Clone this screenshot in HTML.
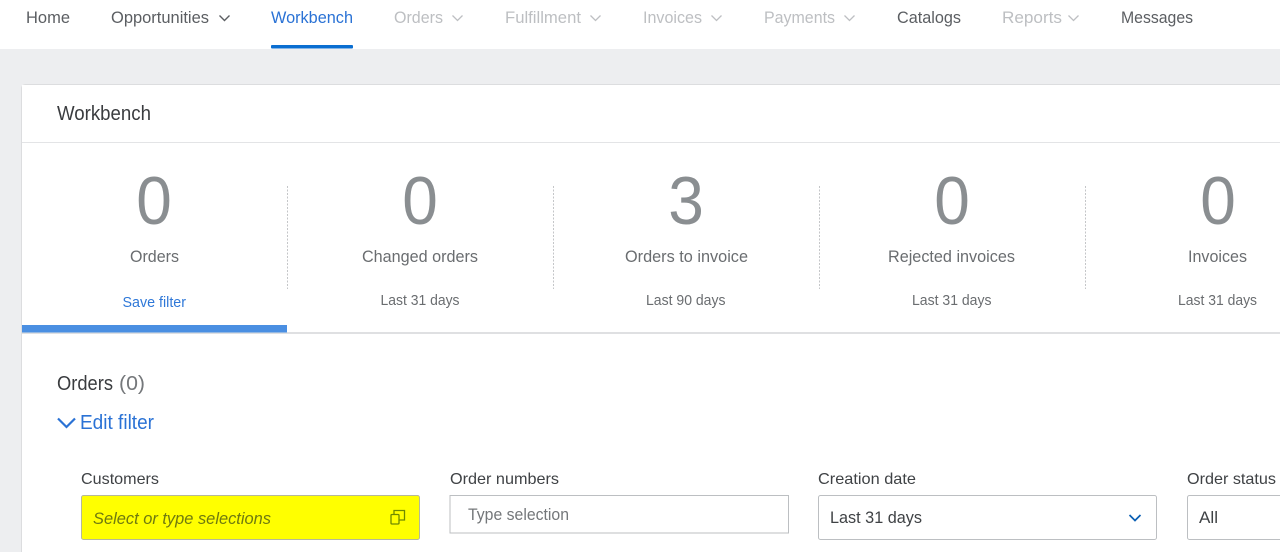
<!DOCTYPE html>
<html lang="en"><head><meta charset="utf-8"><title>Workbench</title>
<style>
html,body{margin:0;padding:0;width:1280px;height:552px;overflow:hidden;background:#fff}
svg{display:block}
text{font-family:"Liberation Sans",sans-serif}
.nav{font-size:16.500px;fill:#5b5e62}
.dis{font-size:16.500px;fill:#bdbfc2}
.lab{font-size:17px;fill:#6a6d70}
.sub{font-size:15px;fill:#6a6d70}
.num{font-size:68px;fill:#8a8e91}
.fl{font-size:16px;fill:#3f4245}
</style></head><body>
<svg width="1280" height="552" viewBox="0 0 1280 552" xmlns="http://www.w3.org/2000/svg">
<rect width="1280" height="552" fill="#edeef0"/>
<rect width="1280" height="49" fill="#fff"/>
<text class="nav" x="26" y="23" textLength="44" lengthAdjust="spacingAndGlyphs">Home</text>
<text class="nav" x="111" y="23" textLength="98" lengthAdjust="spacingAndGlyphs">Opportunities</text>
<path d="M219.500 15.500l5 5 5-5" fill="none" stroke="#5b5e62" stroke-width="1.400"/>
<text class="nav" x="271" y="23" textLength="82" lengthAdjust="spacingAndGlyphs" style="fill:#2a72d5">Workbench</text>
<rect x="271" y="45" width="82" height="3.500" rx="1" fill="#0a6ed1"/>
<text class="dis" x="394" y="23" textLength="49" lengthAdjust="spacingAndGlyphs">Orders</text>
<path d="M452.500 15.500l5 5 5-5" fill="none" stroke="#bdbfc2" stroke-width="1.300"/>
<text class="dis" x="505" y="23" textLength="76" lengthAdjust="spacingAndGlyphs">Fulfillment</text>
<path d="M590.500 15.500l5 5 5-5" fill="none" stroke="#bdbfc2" stroke-width="1.300"/>
<text class="dis" x="643" y="23" textLength="59" lengthAdjust="spacingAndGlyphs">Invoices</text>
<path d="M711.500 15.500l5 5 5-5" fill="none" stroke="#bdbfc2" stroke-width="1.300"/>
<text class="dis" x="764" y="23" textLength="71" lengthAdjust="spacingAndGlyphs">Payments</text>
<path d="M844.500 15.500l5 5 5-5" fill="none" stroke="#bdbfc2" stroke-width="1.300"/>
<text class="nav" x="897" y="23" textLength="64" lengthAdjust="spacingAndGlyphs">Catalogs</text>
<text class="dis" x="1002" y="23" textLength="60" lengthAdjust="spacingAndGlyphs">Reports</text>
<path d="M1068.500 15.500l5 5 5-5" fill="none" stroke="#bdbfc2" stroke-width="1.300"/>
<text class="nav" x="1121" y="23" textLength="72" lengthAdjust="spacingAndGlyphs">Messages</text>

<path d="M21.500 552V88.500a4 4 0 0 1 4-4H1280" fill="#fff" stroke="#dcdddf"/>
<rect x="22" y="85" width="1258" height="467" fill="#fff"/>
<rect x="22" y="142" width="1258" height="1" fill="#e3e4e6"/>
<text x="57" y="120" font-size="20" fill="#3a3c3f" textLength="94" lengthAdjust="spacingAndGlyphs">Workbench</text>

<text class="num" x="136.200" y="224" textLength="35.600" lengthAdjust="spacingAndGlyphs">0</text>
<text class="num" x="402.200" y="224" textLength="35.600" lengthAdjust="spacingAndGlyphs">0</text>
<text class="num" x="668.200" y="224" textLength="35.600" lengthAdjust="spacingAndGlyphs">3</text>
<text class="num" x="934.200" y="224" textLength="35.600" lengthAdjust="spacingAndGlyphs">0</text>
<text class="num" x="1200.200" y="224" textLength="35.600" lengthAdjust="spacingAndGlyphs">0</text>

<text class="lab" x="130" y="262" textLength="49" lengthAdjust="spacingAndGlyphs">Orders</text>
<text class="lab" x="362" y="262" textLength="116" lengthAdjust="spacingAndGlyphs">Changed orders</text>
<text class="lab" x="625" y="262" textLength="123" lengthAdjust="spacingAndGlyphs">Orders to invoice</text>
<text class="lab" x="888" y="262" textLength="127" lengthAdjust="spacingAndGlyphs">Rejected invoices</text>
<text class="lab" x="1188" y="262" textLength="59" lengthAdjust="spacingAndGlyphs">Invoices</text>
<text x="122.500" y="307" font-size="15" fill="#2f78d8" textLength="63.500" lengthAdjust="spacingAndGlyphs">Save filter</text>
<text class="sub" x="380.500" y="305" textLength="79" lengthAdjust="spacingAndGlyphs">Last 31 days</text>
<text class="sub" x="646" y="305" textLength="79.500" lengthAdjust="spacingAndGlyphs">Last 90 days</text>
<text class="sub" x="912" y="305" textLength="79.500" lengthAdjust="spacingAndGlyphs">Last 31 days</text>
<text class="sub" x="1178" y="305" textLength="79" lengthAdjust="spacingAndGlyphs">Last 31 days</text>
<g stroke="#c4c6c8" stroke-width="1" stroke-dasharray="2 1.500">
<path d="M287.500 186v103M553.500 186v103M819.500 186v103M1085.500 186v103"/>
</g>
<rect x="22" y="332" width="1258" height="2" fill="#dfe0e2"/>
<rect x="22" y="325" width="265" height="7.500" fill="#4a8fe2"/>

<text x="57" y="390" font-size="20" fill="#3a3c3f" textLength="56" lengthAdjust="spacingAndGlyphs">Orders</text>
<text x="119" y="390" font-size="20" fill="#75787b" textLength="26" lengthAdjust="spacingAndGlyphs">(0)</text>
<path d="M58 418.500l8.500 8.500 8.500-8.500" fill="none" stroke="#2a72d5" stroke-width="2.200"/>
<text x="80" y="429" font-size="20" fill="#2a72d5" textLength="74" lengthAdjust="spacingAndGlyphs">Edit filter</text>

<text class="fl" x="81" y="484" textLength="78" lengthAdjust="spacingAndGlyphs">Customers</text>
<text class="fl" x="450" y="484" textLength="109" lengthAdjust="spacingAndGlyphs">Order numbers</text>
<text class="fl" x="818" y="484" textLength="98" lengthAdjust="spacingAndGlyphs">Creation date</text>
<text class="fl" x="1187" y="484" textLength="89" lengthAdjust="spacingAndGlyphs">Order status</text>

<rect x="81.500" y="495.500" width="338" height="44" rx="2" fill="#ffff00" stroke="#b5b89a"/>
<text x="93" y="524" font-size="17" font-style="italic" fill="#6f7a10" textLength="178" lengthAdjust="spacingAndGlyphs">Select or type selections</text>
<g fill="none" stroke="#6f8a00" stroke-width="1.300">
<rect x="391" y="514.500" width="8" height="9.500" rx="1"/>
<path d="M394 514v-3.500h10.500v9.500h-5"/>
</g>

<rect x="450" y="495.500" width="338.500" height="37.500" fill="#fff" stroke="#bcbfc2"/>
<text x="468" y="520" font-size="17" fill="#74777a" textLength="101" lengthAdjust="spacingAndGlyphs">Type selection</text>

<rect x="818.500" y="495.500" width="338" height="44" rx="2" fill="#fff" stroke="#bcbfc2"/>
<text x="830" y="523" font-size="17" fill="#3f4245" textLength="92" lengthAdjust="spacingAndGlyphs">Last 31 days</text>
<path d="M1129.500 515l5.500 5.500 5.500-5.500" fill="none" stroke="#0a5fb4" stroke-width="1.700"/>

<path d="M1280 495.500H1189.500a2 2 0 0 0-2 2v40a2 2 0 0 0 2 2H1280" fill="#fff" stroke="#bcbfc2"/>
<text x="1199" y="523" font-size="17" fill="#3f4245" textLength="19" lengthAdjust="spacingAndGlyphs">All</text>
</svg>
</body></html>
